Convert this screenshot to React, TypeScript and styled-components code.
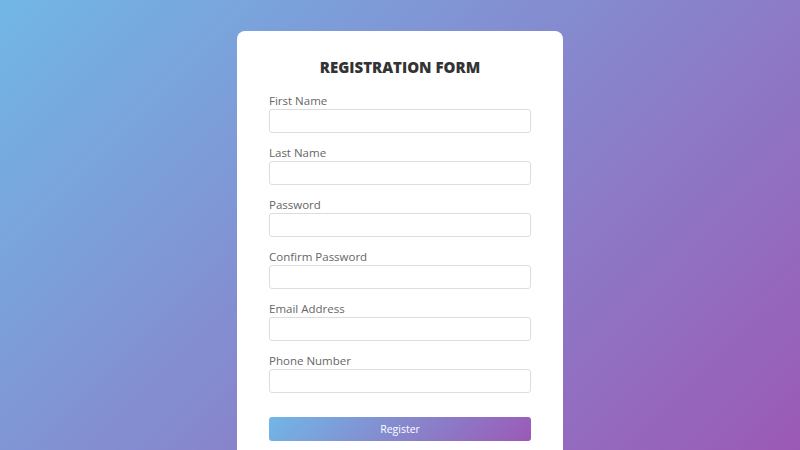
import React from 'react';
import styled, { createGlobalStyle } from 'styled-components';

const GlobalStyle = createGlobalStyle`
    * {
        box-sizing: border-box;
    }
    html, body {
        margin: 0;
        padding: 0;
        height: 100%;
    }
    body {
        font-family: 'Open Sans', 'Noto Sans', sans-serif;
    }
`;

const Page = styled.div`
    height: 100vh;
    overflow: hidden;
    display: flex;
    justify-content: center;
    align-items: flex-start;
    padding-top: 31px;
    background: linear-gradient(135deg, #71b7e6, #9b59b6);
`;

const Card = styled.div`
    width: 326px;
    background: #fff;
    border-radius: 8px;
    padding: 24px 32px 40px;
`;

const Heading = styled.h1`
    margin: 0 0 14px;
    text-align: center;
    font-size: 15px;
    line-height: 24px;
    font-weight: 800;
    color: #333;
`;

const Field = styled.div`
    display: flex;
    flex-direction: column;
    margin-bottom: 12px;
`;

const Label = styled.label`
    font-size: 11.5px;
    line-height: 17px;
    margin-top: -1px;
    color: #666;
`;

const Input = styled.input`
    height: 24px;
    border: 1px solid #ddd;
    border-radius: 3px;
    padding: 0 8px;
    outline: none;
    font: inherit;
`;

const Button = styled.button`
    width: 100%;
    height: 24px;
    margin-top: 12px;
    border: none;
    border-radius: 3px;
    color: #fff;
    font-family: inherit;
    font-size: 10.5px;
    background: linear-gradient(135deg, #71b7e6, #9b59b6);
    cursor: pointer;
`;

const fields = [
    { label: 'First Name', type: 'text' },
    { label: 'Last Name', type: 'text' },
    { label: 'Password', type: 'password' },
    { label: 'Confirm Password', type: 'password' },
    { label: 'Email Address', type: 'email' },
    { label: 'Phone Number', type: 'tel' },
];

const App = () => {
    return (
        <>
            <GlobalStyle />
            <Page>
                <Card>
                    <Heading>REGISTRATION FORM</Heading>
                    <form onSubmit={(e) => e.preventDefault()}>
                        {fields.map((f) => (
                            <Field key={f.label}>
                                <Label>{f.label}</Label>
                                <Input type={f.type} />
                            </Field>
                        ))}
                        <Button type='submit'>Register</Button>
                    </form>
                </Card>
            </Page>
        </>
    );
};

export default App;
